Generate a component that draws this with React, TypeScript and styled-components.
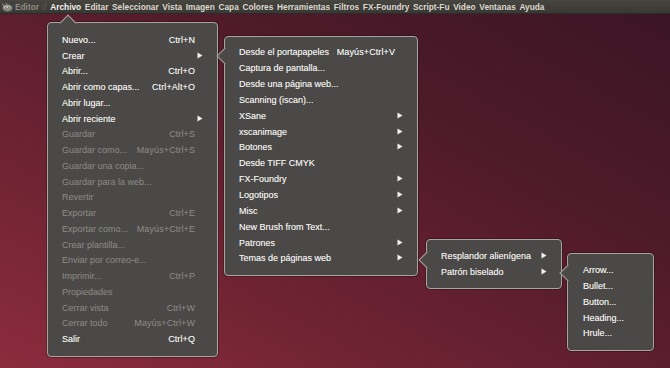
import React from "react";
import styled, { createGlobalStyle } from "styled-components";

const Global = createGlobalStyle`
  html, body { margin: 0; padding: 0; }
  body { width: 670px; height: 368px; overflow: hidden; }
  #root { width: 670px; height: 368px; }
`;

const Desktop = styled.div`
  position: relative;
  width: 670px;
  height: 368px;
  overflow: hidden;
  background: linear-gradient(to bottom left, #3a1524 0%, #4f1a2a 35%, #6e2332 70%, #8c2c3d 100%);
  font-family: "Liberation Sans", Arial, sans-serif;
`;

const MenuBar = styled.div`
  height: 14px;
  display: flex;
  align-items: center;
  gap: 3.7px;
  padding-left: 1px;
  background: linear-gradient(#46453f, #393834);
  border-bottom: 1px solid #2c2b28;
  box-sizing: border-box;
  font: bold 8.3px "Liberation Sans", Arial, sans-serif;
  color: #dfdbd2;
  white-space: nowrap;
`;

const AppName = styled.span`
  flex: 0 0 45.5px;
  display: flex;
  align-items: center;
  gap: 2px;
  color: #8f8d87;
`;

const Faint = styled.span`
  color: #5c5a55;
  font-weight: normal;
  margin-left: 1px;
`;

const BarItem = styled.span<{ $active?: boolean }>`
  color: ${(p) => (p.$active ? "#f4f2ee" : "#dcd8cf")};
`;

const Menu = styled.div<{ $x: number; $y: number; $w: number; $pt: number; $pb: number; $pl: number; $rh: number }>`
  position: absolute;
  left: ${(p) => p.$x}px;
  top: ${(p) => p.$y}px;
  width: ${(p) => p.$w}px;
  box-sizing: border-box;
  padding: ${(p) => p.$pt}px 14px ${(p) => p.$pb}px ${(p) => p.$pl}px;
  --row-h: ${(p) => p.$rh}px;
  background: #4b4947;
  border: 1px solid #a8a4a0;
  border-radius: 4px;
  box-shadow: 0 0 0 1px rgba(0, 0, 0, 0.25);
  display: flex;
  flex-direction: column;
`;

const NotchUp = styled.div<{ $x: number }>`
  position: absolute;
  top: -6px;
  left: ${(p) => p.$x - 5.5}px;
  width: 11px;
  height: 11px;
  background: #4b4947;
  border-top: 1px solid #a8a4a0;
  border-left: 1px solid #a8a4a0;
  transform: rotate(45deg);
`;

const NotchLeft = styled.div<{ $y: number }>`
  position: absolute;
  left: -6px;
  top: ${(p) => p.$y - 5.5}px;
  width: 11px;
  height: 11px;
  background: #4b4947;
  border-bottom: 1px solid #a8a4a0;
  border-left: 1px solid #a8a4a0;
  transform: rotate(45deg);
`;

const Row = styled.div<{ $disabled?: boolean }>`
  position: relative;
  height: var(--row-h);
  display: grid;
  grid-template-columns: 1fr auto 6px;
  column-gap: 2px;
  align-items: center;
  font-size: 9px;
  color: ${(p) => (p.$disabled ? "#8e8b87" : "#f0efec")};
  white-space: nowrap;
  text-shadow: ${(p) => (p.$disabled ? "none" : "0 0 0.4px rgba(255,255,255,0.6)")};
`;

const Shortcut = styled.span`
  text-align: right;
  letter-spacing: 0.1px;
`;

const Arrow = () => (
  <svg width="6" height="7" viewBox="0 0 6 7">
    <polygon points="0.5,0.5 5.5,3.5 0.5,6.5" fill="#f2f2f2" />
  </svg>
);

type Item = { label: string; shortcut?: string; sub?: boolean; disabled?: boolean };

const archivo: Item[] = [
  { label: "Nuevo...", shortcut: "Ctrl+N" },
  { label: "Crear", sub: true },
  { label: "Abrir...", shortcut: "Ctrl+O" },
  { label: "Abrir como capas...", shortcut: "Ctrl+Alt+O" },
  { label: "Abrir lugar..." },
  { label: "Abrir reciente", sub: true },
  { label: "Guardar", shortcut: "Ctrl+S", disabled: true },
  { label: "Guardar como...", shortcut: "Mayús+Ctrl+S", disabled: true },
  { label: "Guardar una copia...", disabled: true },
  { label: "Guardar para la web...", disabled: true },
  { label: "Revertir", disabled: true },
  { label: "Exportar", shortcut: "Ctrl+E", disabled: true },
  { label: "Exportar como...", shortcut: "Mayús+Ctrl+E", disabled: true },
  { label: "Crear plantilla...", disabled: true },
  { label: "Enviar por correo-e...", disabled: true },
  { label: "Imprimir...", shortcut: "Ctrl+P", disabled: true },
  { label: "Propiedades", disabled: true },
  { label: "Cerrar vista", shortcut: "Ctrl+W", disabled: true },
  { label: "Cerrar todo", shortcut: "Mayús+Ctrl+W", disabled: true },
  { label: "Salir", shortcut: "Ctrl+Q" },
];

const crear: Item[] = [
  { label: "Desde el portapapeles", shortcut: "Mayús+Ctrl+V" },
  { label: "Captura de pantalla..." },
  { label: "Desde una página web..." },
  { label: "Scanning (iscan)..." },
  { label: "XSane", sub: true },
  { label: "xscanimage", sub: true },
  { label: "Botones", sub: true },
  { label: "Desde TIFF CMYK" },
  { label: "FX-Foundry", sub: true },
  { label: "Logotipos", sub: true },
  { label: "Misc", sub: true },
  { label: "New Brush from Text..." },
  { label: "Patrones", sub: true },
  { label: "Temas de páginas web", sub: true },
];

const temas: Item[] = [
  { label: "Resplandor alienígena", sub: true },
  { label: "Patrón biselado", sub: true },
];

const biselado: Item[] = [
  { label: "Arrow..." },
  { label: "Bullet..." },
  { label: "Button..." },
  { label: "Heading..." },
  { label: "Hrule..." },
];

const Rows = ({ items }: { items: Item[] }) => (
  <>
    {items.map((it) => (
      <Row key={it.label} $disabled={it.disabled}>
        <span>{it.label}</span>
        <Shortcut>{it.shortcut ?? ""}</Shortcut>
        <span>{it.sub ? <Arrow /> : null}</span>
      </Row>
    ))}
  </>
);

const Wilber = () => (
  <svg width="12" height="10" viewBox="0 0 12 10">
    <ellipse cx="6.5" cy="6" rx="5" ry="3.4" fill="#8a877f" />
    <path d="M2 4 L0.5 1 L4 3 Z" fill="#8a877f" />
    <path d="M5 3 L5.5 0.5 L7 3 Z" fill="#8a877f" />
    <circle cx="4.5" cy="5" r="1.3" fill="#e8e6e0" />
    <circle cx="7.5" cy="5" r="1.3" fill="#e8e6e0" />
    <circle cx="4.7" cy="5.2" r="0.6" fill="#222" />
    <circle cx="7.7" cy="5.2" r="0.6" fill="#222" />
    <path d="M9 8 L11.5 9.5 L8 9 Z" fill="#6d6a63" />
  </svg>
);

const barItems = [
  "Editar", "Seleccionar", "Vista", "Imagen", "Capa", "Colores", "Herramientas",
  "Filtros", "FX-Foundry", "Script-Fu", "Video", "Ventanas", "Ayuda",
];

export default function App() {
  return (
    <Desktop>
      <Global />
      <MenuBar>
        <AppName>
          <Wilber />
          <span>Editor</span>
          <Faint>d</Faint>
        </AppName>
        <BarItem $active>Archivo</BarItem>
        {barItems.map((b) => (
          <BarItem key={b}>{b}</BarItem>
        ))}
      </MenuBar>

      <Menu $x={47} $y={22} $w={171} $pt={9} $pb={9} $pl={14} $rh={15.75}>
        <NotchUp $x={19} />
        <Rows items={archivo} />
      </Menu>

      <Menu $x={224} $y={36} $w={194} $pt={7.5} $pb={8.5} $pl={14} $rh={15.85}>
        <NotchLeft $y={18} />
        <Rows items={crear} />
      </Menu>

      <Menu $x={426} $y={239} $w={136} $pt={7.5} $pb={8.5} $pl={14} $rh={16}>
        <NotchLeft $y={19} />
        <Rows items={temas} />
      </Menu>

      <Menu $x={567} $y={253} $w={87} $pt={8.5} $pb={8.5} $pl={15} $rh={15.75}>
        <NotchLeft $y={18} />
        <Rows items={biselado} />
      </Menu>
    </Desktop>
  );
}
